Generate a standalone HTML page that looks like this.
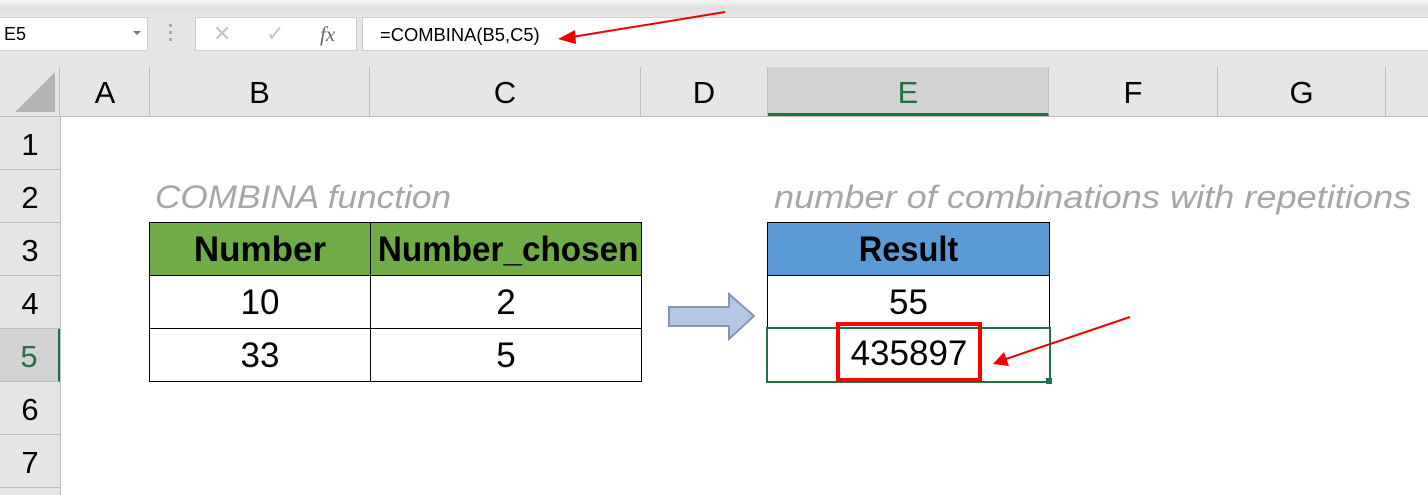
<!DOCTYPE html>
<html><head><meta charset="utf-8"><style>
*{margin:0;padding:0;box-sizing:border-box}
body{width:1428px;height:495px;overflow:hidden;background:#fff;font-family:"Liberation Sans",sans-serif;position:relative}
.a{position:absolute}
.ch{position:absolute;top:67px;height:49px;border-right:1px solid #bdbdbd;font-size:31px;text-align:center;line-height:52px;color:#000}
.rh{position:absolute;left:0;width:60px;height:53px;border-bottom:1px solid #bdbdbd;font-size:31px;text-align:center;line-height:56px;color:#000}
.c{position:absolute;border:1px solid #000;text-align:center;font-size:35px;line-height:54px;white-space:nowrap}
.n{display:inline-block}
</style></head><body>
<div class="a" style="left:0;top:0;width:1428px;height:17px;background:linear-gradient(#f7f7f7,#e0e0e0 40%,#e8e8e8)"></div>
<div class="a" style="left:0;top:17px;width:1428px;height:100px;background:#e6e6e6"></div>
<div class="a" style="left:0;top:17px;width:148px;height:34px;background:#fff;border:1px solid #cfcfcf;border-left:none;font-size:18px;line-height:33px;padding-left:4px">E5</div>
<div class="a" style="left:133px;top:31px;border-left:4px solid transparent;border-right:4px solid transparent;border-top:4px solid #777"></div>
<div class="a" style="left:169px;top:24px;width:3px;height:20px;background:repeating-linear-gradient(#aaa 0 3px,transparent 3px 7px)"></div>
<div class="a" style="left:195px;top:17px;width:162px;height:34px;background:#fff;border:1px solid #cfcfcf;color:#c4c4c4;font-size:22px;line-height:32px">
<span class="a" style="left:17px">✕</span><span class="a" style="left:70px">✓</span><span class="a" style="left:124px;color:#666;font-family:'Liberation Serif',serif;font-style:italic;font-size:21px">fx</span></div>
<div class="a" style="left:362px;top:17px;width:1070px;height:34px;background:#fff;border:1px solid #cfcfcf;font-size:18px;line-height:34px;padding-left:17px"><span class="n" style="transform:scaleX(1.02);transform-origin:left">=COMBINA(B5,C5)</span></div>
<div class="a" style="left:0;top:67px;width:60px;height:49px;border-right:1px solid #bdbdbd"></div>
<div class="a" style="left:15px;top:72px;width:0;height:0;border-left:40px solid transparent;border-bottom:40px solid #b4b4b4"></div>
<div class="ch" style="left:61px;width:89px">A</div>
<div class="ch" style="left:150px;width:220px">B</div>
<div class="ch" style="left:370px;width:271px">C</div>
<div class="ch" style="left:641px;width:127px">D</div>
<div class="ch" style="left:768px;width:281px;background:#d2d2d2;color:#217346;border-bottom:3px solid #217346">E</div>
<div class="ch" style="left:1049px;width:169px">F</div>
<div class="ch" style="left:1218px;width:168px">G</div>
<div class="a" style="left:0;top:116px;width:1428px;height:1px;background:#bdbdbd"></div>
<div class="a" style="left:0;top:117px;width:61px;height:378px;background:#e6e6e6;border-right:1px solid #bdbdbd"></div>
<div class="rh" style="top:117px">1</div>
<div class="rh" style="top:170px">2</div>
<div class="rh" style="top:223px">3</div>
<div class="rh" style="top:276px">4</div>
<div class="rh" style="top:329px;background:#d2d2d2;color:#217346;border-right:2px solid #217346">5</div>
<div class="rh" style="top:382px">6</div>
<div class="rh" style="top:435px">7</div>
<div class="a" style="left:155px;top:179px;font-size:32px;font-style:italic;color:#a6a6a6;white-space:nowrap"><span class="n" style="transform:scaleX(1.1);transform-origin:left">COMBINA function</span></div>
<div class="a" style="left:774px;top:179px;font-size:32px;font-style:italic;color:#a6a6a6;white-space:nowrap"><span class="n" style="transform:scaleX(1.13);transform-origin:left">number of combinations with repetitions</span></div>
<div class="c" style="left:149px;top:222px;width:222px;height:54px;background:#70ad47;font-weight:bold">Number</div>
<div class="c" style="left:370px;top:222px;width:272px;height:54px;background:#70ad47;font-weight:bold"><span class="n" style="transform:scaleX(0.95)">Number_chosen</span></div>
<div class="c" style="left:149px;top:275px;width:222px;height:54px">10</div>
<div class="c" style="left:370px;top:275px;width:272px;height:54px">2</div>
<div class="c" style="left:149px;top:328px;width:222px;height:54px">33</div>
<div class="c" style="left:370px;top:328px;width:272px;height:54px">5</div>
<div class="c" style="left:767px;top:222px;width:283px;height:54px;background:#5b9bd5;font-weight:bold"><span class="n" style="transform:scaleX(0.93)">Result</span></div>
<div class="c" style="left:767px;top:275px;width:283px;height:54px">55</div>
<div class="c" style="left:766px;top:327px;width:285px;height:56px;border:2px solid #217346"></div>
<div class="a" style="left:1046px;top:378px;width:6px;height:6px;background:#217346"></div>
<div class="a" style="left:836px;top:322px;width:146px;height:60px;border:4px solid #f00;font-size:35px;text-align:center;line-height:56px">435897</div>
<svg class="a" style="left:0;top:0" width="1428" height="495">
<polygon points="669,307 729,307 729,294 754,316 729,339 729,326 669,326" fill="#b4c7e7" stroke="#8497b0" stroke-width="2"/>
<line x1="725" y1="12" x2="572" y2="37" stroke="#e00" stroke-width="2"/>
<polygon points="558,39 575,30 576,44" fill="#e00"/>
<line x1="1130" y1="317" x2="1006" y2="359" stroke="#e00" stroke-width="2"/>
<polygon points="993,364 1004,352 1009,366" fill="#e00"/>
</svg>
</body></html>
